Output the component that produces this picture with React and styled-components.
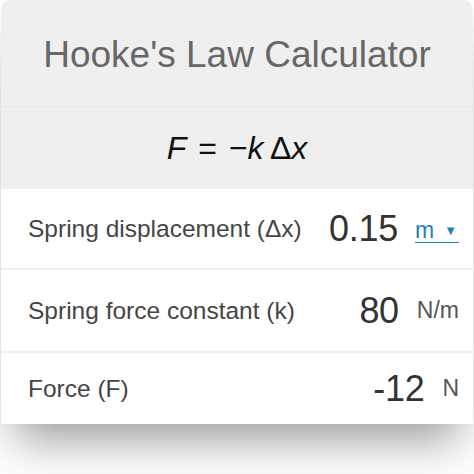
import React from 'react'
import styled, { createGlobalStyle } from 'styled-components'

const GlobalStyle = createGlobalStyle`
    html, body {
        margin: 0;
        padding: 0;
        background: #ffffff;
        font-family: "Liberation Sans", Arial, sans-serif;
    }
`

const Page = styled.div`
    width: 474px;
    height: 474px;
    overflow: hidden;
    padding: 0 1px;
    box-sizing: border-box;
`

const Card = styled.div`
    background: #ffffff;
    border-radius: 10px 10px 0 0;
    box-shadow: 0 28px 46px -14px rgba(0, 0, 0, 0.42);
`

const Header = styled.div`
    background: #efefef;
    border-radius: 10px 10px 0 0;
`

const Title = styled.h1`
    margin: 0;
    height: 107px;
    display: flex;
    align-items: center;
    justify-content: center;
    font-size: 37px;
    font-weight: 400;
    color: #676767;
    border-bottom: 1px solid #e7e7e7;
    box-sizing: border-box;
    padding-top: 4px;
`

const Formula = styled.div`
    height: 82px;
    display: flex;
    align-items: center;
    justify-content: center;
    font-size: 32px;
    color: #111;
    box-sizing: border-box;

    i {
        font-style: italic;
    }
    span {
        margin: 0 12px;
    }
`

const Row = styled.div`
    height: ${(p) => p.$height}px;
    display: flex;
    align-items: center;
    padding: 0 14px 0 27px;
    border-top: ${(p) => (p.$first ? 'none' : '2px solid #f0f0f0')};
`

const Label = styled.div`
    flex: 1;
    font-size: 24.5px;
    color: #454545;
`

const Value = styled.div`
    font-size: 36px;
    color: #333;
    letter-spacing: -0.3px;
`

const Unit = styled.div`
    margin-left: 18px;
    font-size: 23px;
    color: #555;
`

// unit picker: text plus caret, underlined as one piece
const UnitSelect = styled.div`
    margin-left: 17px;
    font-size: 23px;
    line-height: 1;
    color: #1f82b8;
    border-bottom: 1.5px solid #1f82b8;
    padding-top: 4px;
    display: flex;
    align-items: center;
`

const Caret = styled.span`
    font-size: 13px;
    margin-left: 10px;
    margin-right: 2px;
`

const fields = [
    { label: 'Spring displacement (Δx)', value: '0.15', unit: 'm', select: true, height: 79 },
    { label: 'Spring force constant (k)', value: '80', unit: 'N/m', height: 81 },
    { label: 'Force (F)', value: '-12', unit: 'N', height: 71 },
]

export default function App() {
    return (
        <Page>
            <GlobalStyle />
            <Card>
                <Header>
                    <Title>Hooke's Law Calculator</Title>
                    <Formula>
                        <i>F</i>
                        <span>=</span>
                        −<i>k</i>&thinsp;Δ<i>x</i>
                    </Formula>
                </Header>
                {fields.map((f, i) => (
                    <Row key={f.label} $height={f.height} $first={i === 0}>
                        <Label>{f.label}</Label>
                        <Value>{f.value}</Value>
                        {f.select ? (
                            <UnitSelect>
                                {f.unit}
                                <Caret>▼</Caret>
                            </UnitSelect>
                        ) : (
                            <Unit>{f.unit}</Unit>
                        )}
                    </Row>
                ))}
            </Card>
        </Page>
    )
}
